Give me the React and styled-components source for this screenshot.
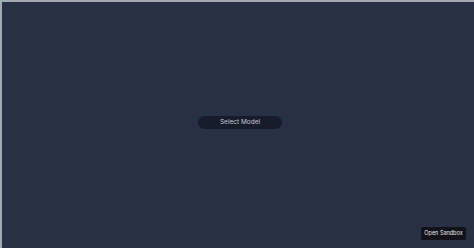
import React from "react";
import styled, { createGlobalStyle } from "styled-components";

const GlobalStyle = createGlobalStyle`
  html, body {
    margin: 0;
    padding: 0;
    height: 100%;
  }
  #root {
    height: 100%;
  }
  * {
    box-sizing: border-box;
  }
`;

export default function App() {
  return (
    <>
      <GlobalStyle />
      <Frame>
        <SelectButton>Select Model</SelectButton>
        <SandboxButton>Open Sandbox</SandboxButton>
      </Frame>
    </>
  );
}

const Frame = styled.div`
  position: relative;
  width: 474px;
  height: 248px;
  border-style: solid;
  border-width: 2px 0 0 2px;
  border-color: #a4a8b2;
  background: #283044;
  display: flex;
  align-items: center;
  justify-content: center;
  padding: 0 0 5px 4px;
  font-family: "Inter", "Liberation Sans", sans-serif;
`;

const SelectButton = styled.button`
  width: 84px;
  height: 13px;
  border: none;
  border-radius: 7px;
  background: #171c2b;
  color: #c9ccd4;
  font-family: inherit;
  font-size: 6.5px;
  line-height: 13px;
  padding: 0;
  cursor: pointer;
`;

const SandboxButton = styled.button`
  position: absolute;
  right: 8px;
  bottom: 8px;
  width: 45px;
  height: 13px;
  padding: 0;
  border: none;
  border-radius: 2px;
  background: #121318;
  color: #e4e4e7;
  font-family: inherit;
  font-size: 5.5px;
  line-height: 13px;
  cursor: pointer;
`;
